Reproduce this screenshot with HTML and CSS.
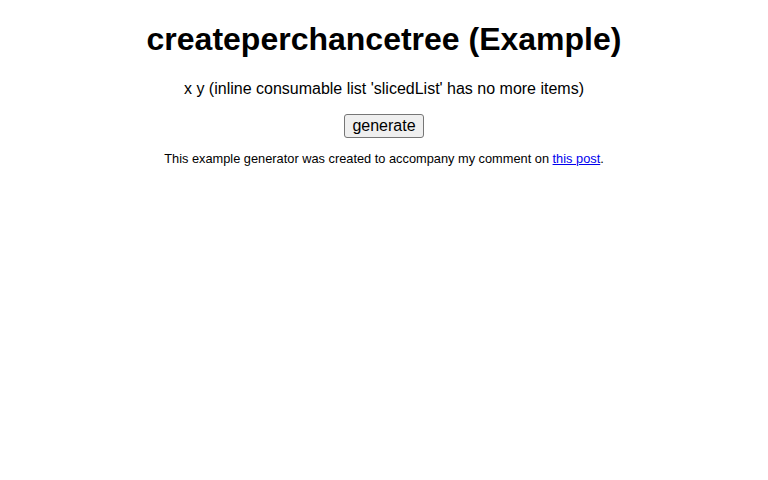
FILE: index.html
```
<!DOCTYPE html>
<html>
<head>
<meta charset="utf-8">
<title>createperchancetree (Example)</title>
<link rel="stylesheet" href="styles.css">
</head>
<body>
<div class="page">
  <h1 class="title">createperchancetree (Example)</h1>
  <p class="output">x y (inline consumable list 'slicedList' has no more items)</p>
  <button class="generate">generate</button>
  <p class="note">This example generator was created to accompany my comment on <a href="#">this post</a>.</p>
</div>
</body>
</html>
```
FILE: styles.css
```
html, body {
  background: #ffffff;
}
body {
  margin: 0 8px 8px;
  font-family: "Liberation Sans", Arial, sans-serif;
  color: #000000;
}
.page {
  text-align: center;
  padding-top: 0.1px;
}
.title {
  font-size: 32px;
  font-weight: bold;
  margin: 20.5px 0 22px;
}
.output {
  font-size: 16px;
  margin: 16px 0;
}
.generate {
  font-family: "Liberation Sans", Arial, sans-serif;
  font-size: 16px;
  color: #000000;
  background: #efefef;
  border: 1px solid #767676;
  border-radius: 3px;
  padding: 2px 7px;
  line-height: normal;
}
.note {
  font-size: 12.8px;
  margin: 13px 0;
}
.note a {
  color: #0000ee;
}
```
